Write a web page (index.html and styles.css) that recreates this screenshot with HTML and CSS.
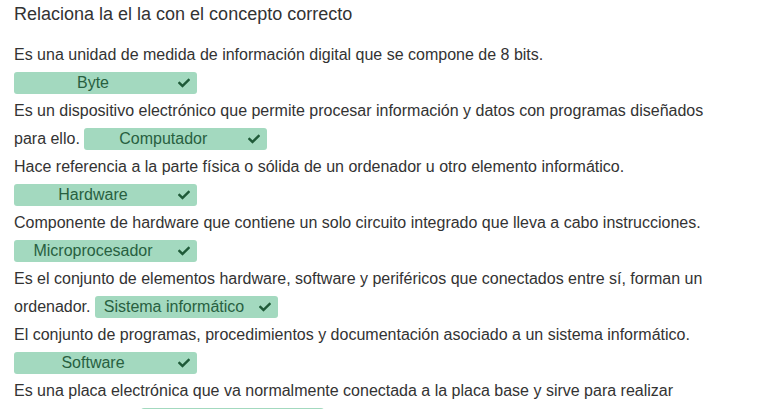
FILE: index.html
```html
<!DOCTYPE html>
<html lang="es">
<head>
<meta charset="utf-8">
<title>Relaciona</title>
<link rel="stylesheet" href="styles.css">
</head>
<body>
<div class="page">
  <div class="title">Relaciona la el la con el concepto correcto</div>
  <div class="items">
    <div class="item">Es una unidad de medida de información digital que se compone de 8 bits. <span class="chip"><span class="label">Byte</span><svg class="check" viewBox="0 0 512 512"><path d="M173.9 439.4l-166.4-166.4c-10-10-10-26.2 0-36.2l36.2-36.2c10-10 26.2-10 36.2 0L192 312.7 432.1 72.6c10-10 26.2-10 36.2 0l36.2 36.2c10 10 10 26.2 0 36.2l-294.4 294.4c-10 10-26.2 10-36.2 0z"/></svg></span></div>
    <div class="item">Es un dispositivo electrónico que permite procesar información y datos con programas diseñados para ello. <span class="chip"><span class="label">Computador</span><svg class="check" viewBox="0 0 512 512"><path d="M173.9 439.4l-166.4-166.4c-10-10-10-26.2 0-36.2l36.2-36.2c10-10 26.2-10 36.2 0L192 312.7 432.1 72.6c10-10 26.2-10 36.2 0l36.2 36.2c10 10 10 26.2 0 36.2l-294.4 294.4c-10 10-26.2 10-36.2 0z"/></svg></span></div>
    <div class="item">Hace referencia a la parte física o sólida de un ordenador u otro elemento informático. <span class="chip"><span class="label">Hardware</span><svg class="check" viewBox="0 0 512 512"><path d="M173.9 439.4l-166.4-166.4c-10-10-10-26.2 0-36.2l36.2-36.2c10-10 26.2-10 36.2 0L192 312.7 432.1 72.6c10-10 26.2-10 36.2 0l36.2 36.2c10 10 10 26.2 0 36.2l-294.4 294.4c-10 10-26.2 10-36.2 0z"/></svg></span></div>
    <div class="item">Componente de hardware que contiene un solo circuito integrado que lleva a cabo instrucciones. <span class="chip"><span class="label">Microprocesador</span><svg class="check" viewBox="0 0 512 512"><path d="M173.9 439.4l-166.4-166.4c-10-10-10-26.2 0-36.2l36.2-36.2c10-10 26.2-10 36.2 0L192 312.7 432.1 72.6c10-10 26.2-10 36.2 0l36.2 36.2c10 10 10 26.2 0 36.2l-294.4 294.4c-10 10-26.2 10-36.2 0z"/></svg></span></div>
    <div class="item">Es el conjunto de elementos hardware, software y periféricos que conectados entre sí, forman un ordenador. <span class="chip"><span class="label">Sistema informático</span><svg class="check" viewBox="0 0 512 512"><path d="M173.9 439.4l-166.4-166.4c-10-10-10-26.2 0-36.2l36.2-36.2c10-10 26.2-10 36.2 0L192 312.7 432.1 72.6c10-10 26.2-10 36.2 0l36.2 36.2c10 10 10 26.2 0 36.2l-294.4 294.4c-10 10-26.2 10-36.2 0z"/></svg></span></div>
    <div class="item">El conjunto de programas, procedimientos y documentación asociado a un sistema informático. <span class="chip"><span class="label">Software</span><svg class="check" viewBox="0 0 512 512"><path d="M173.9 439.4l-166.4-166.4c-10-10-10-26.2 0-36.2l36.2-36.2c10-10 26.2-10 36.2 0L192 312.7 432.1 72.6c10-10 26.2-10 36.2 0l36.2 36.2c10 10 10 26.2 0 36.2l-294.4 294.4c-10 10-26.2 10-36.2 0z"/></svg></span></div>
    <div class="item">Es una placa electrónica que va normalmente conectada a la placa base y sirve para realizar tareas concretas. <span class="chip"><span class="label">Tarjeta de expansión</span><svg class="check" viewBox="0 0 512 512"><path d="M173.9 439.4l-166.4-166.4c-10-10-10-26.2 0-36.2l36.2-36.2c10-10 26.2-10 36.2 0L192 312.7 432.1 72.6c10-10 26.2-10 36.2 0l36.2 36.2c10 10 10 26.2 0 36.2l-294.4 294.4c-10 10-26.2 10-36.2 0z"/></svg></span></div>
  </div>
</div>
</body>
</html>
```
FILE: styles.css
```css
html, body {
  margin: 0;
  padding: 0;
  background: #ffffff;
}
body {
  font-family: "Liberation Sans", Arial, sans-serif;
  color: #333333;
}
.page {
  padding: 0 0 0 14px;
  width: 700px;
}
.title {
  font-size: 18px;
  line-height: 28px;
  margin-bottom: 13px;
}
.item {
  font-size: 16px;
  line-height: 28px;
}
.chip {
  display: inline-flex;
  align-items: center;
  gap: 5px;
  box-sizing: border-box;
  width: 183px;
  height: 22px;
  vertical-align: middle;
  background: #a3d9bf;
  border-radius: 3px;
  color: #28603f;
  padding: 0 6px 0 0;
  position: relative;
  top: -1px;
}
.label {
  flex: 1;
  text-align: center;
  line-height: 22px;
  white-space: nowrap;
}
.check {
  width: 14px;
  height: 12px;
  fill: #1f5a38;
}
```
